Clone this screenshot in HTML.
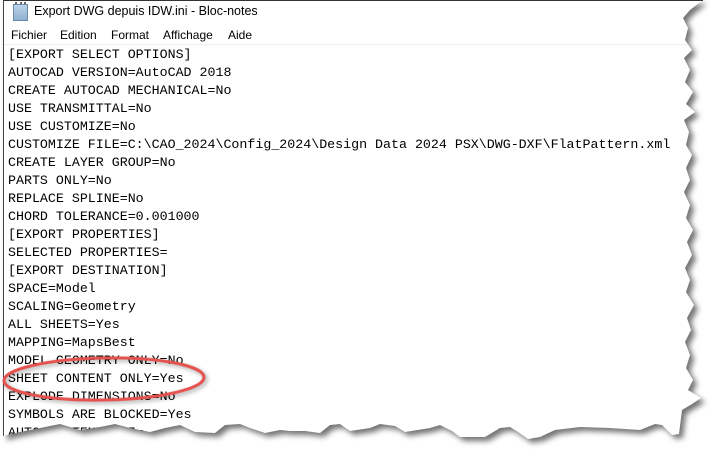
<!DOCTYPE html>
<html><head><meta charset="utf-8"><style>
body{margin:0;width:727px;height:464px;background:#fff;overflow:hidden;position:relative}
#sh{position:absolute;left:0;top:0;width:727px;height:464px;filter:drop-shadow(4px 4px 3px rgba(0,0,0,.55))}
#win{position:absolute;left:0;top:0;width:727px;height:464px;background:#fff;
clip-path:polygon(3px 0,703px 0,690px 10px,683px 18px,688px 28px,685px 40px,692px 50px,684px 58px,690px 70px,685px 82px,693px 92px,686px 104px,695px 112px,684px 120px,689px 132px,686px 145px,692px 155px,686px 168px,690px 180px,684px 192px,690px 205px,686px 218px,693px 230px,687px 242px,692px 255px,685px 268px,690px 280px,686px 292px,694px 305px,687px 318px,691px 330px,685px 342px,690px 355px,686px 368px,693px 380px,688px 390px,701px 398px,692px 404px,682px 410px,679px 434px,672px 435px,662px 425px,655px 424px,640px 430px,610px 428px,580px 427px,555px 430px,540px 437px,528px 439px,518px 432px,510px 427px,500px 428px,485px 437px,460px 437px,452px 431px,440px 425px,430px 428px,405px 432px,395px 426px,380px 424px,370px 428px,350px 431px,340px 424px,330px 425px,320px 433px,305px 431px,290px 431px,280px 430px,265px 433px,250px 428px,240px 424px,225px 425px,215px 433px,195px 432px,180px 425px,165px 428px,150px 432px,130px 428px,115px 424px,100px 427px,80px 430px,60px 424px,40px 428px,20px 432px,3px 436px)}
#bord{position:absolute;left:3px;top:0;width:1px;height:436px;background:#444}
.t{position:absolute;font-family:"Liberation Sans",sans-serif;font-size:12px;color:#000}
#txt{position:absolute;left:8px;top:46px;font-family:"Liberation Mono",monospace;font-size:13.3px;line-height:18px;white-space:pre;color:#000}
</style></head><body>
<div id="sh"><div id="win">
<div style="position:absolute;left:13px;top:4px;width:13px;height:15px;background:linear-gradient(#bcd4ea,#8fb0d0);border:1px solid #6a8aa8"></div>
<div style="position:absolute;left:15px;top:2px;width:11px;height:3px;border-top:2px dotted #666"></div>
<div class="t" style="left:34px;top:4px;font-size:12.5px">Export DWG depuis IDW.ini - Bloc-notes</div>
<div class="t" style="left:11px;top:28px">Fichier</div>
<div class="t" style="left:60px;top:28px">Edition</div>
<div class="t" style="left:111px;top:28px">Format</div>
<div class="t" style="left:163px;top:28px">Affichage</div>
<div class="t" style="left:228px;top:28px">Aide</div>
<div style="position:absolute;left:3px;top:44px;width:700px;height:1px;background:#eee"></div>
<div id="txt">[EXPORT SELECT OPTIONS]
AUTOCAD VERSION=AutoCAD 2018
CREATE AUTOCAD MECHANICAL=No
USE TRANSMITTAL=No
USE CUSTOMIZE=No
CUSTOMIZE FILE=C:\CAO_2024\Config_2024\Design Data 2024 PSX\DWG-DXF\FlatPattern.xml
CREATE LAYER GROUP=No
PARTS ONLY=No
REPLACE SPLINE=No
CHORD TOLERANCE=0.001000
[EXPORT PROPERTIES]
SELECTED PROPERTIES=
[EXPORT DESTINATION]
SPACE=Model
SCALING=Geometry
ALL SHEETS=Yes
MAPPING=MapsBest
MODEL GEOMETRY ONLY=No
SHEET CONTENT ONLY=Yes
EXPLODE DIMENSIONS=No
SYMBOLS ARE BLOCKED=Yes
AUTOCAD TEMPLATE=</div>
<div id="bord"></div>
</div></div>
<svg width="727" height="464" style="position:absolute;left:0;top:0">
<line x1="3" y1="0.5" x2="703" y2="0.5" stroke="#333"/>
<ellipse cx="104" cy="379" rx="100" ry="21" fill="none" stroke="#e4534f" stroke-width="3" style="filter:drop-shadow(2px 2px 2px rgba(0,0,0,.35))" transform="rotate(-1 104 379)"/>
</svg>
</body></html>
